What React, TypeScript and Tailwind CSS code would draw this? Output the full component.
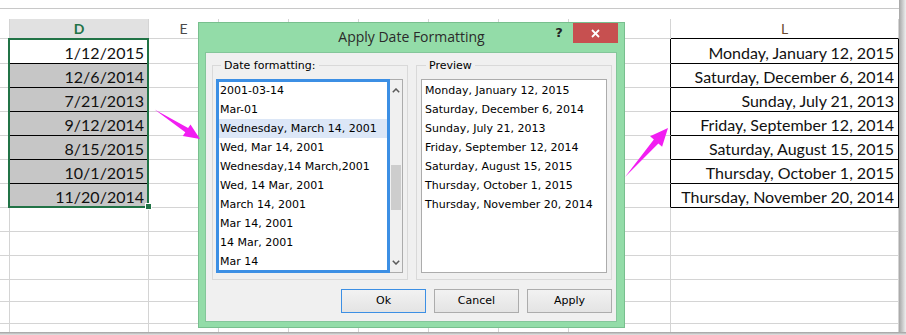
import React from "react";

const dVals = ["1/12/2015", "12/6/2014", "7/21/2013", "9/12/2014", "8/15/2015", "10/1/2015", "11/20/2014"];
const lVals = [
  "Monday, January 12, 2015",
  "Saturday, December 6, 2014",
  "Sunday, July 21, 2013",
  "Friday, September 12, 2014",
  "Saturday, August 15, 2015",
  "Thursday, October 1, 2015",
  "Thursday, November 20, 2014",
];
const formats = [
  "2001-03-14",
  "Mar-01",
  "Wednesday, March 14, 2001",
  "Wed, Mar 14, 2001",
  "Wednesday,14 March,2001",
  "Wed, 14 Mar, 2001",
  "March 14, 2001",
  "Mar 14, 2001",
  "14 Mar, 2001",
  "Mar 14",
];

const G = "border-[#d4d4d4]";

function EmptyCells({ last }: { last?: boolean }) {
  const b = last ? "border-r" : "border-r border-b";
  return (
    <>
      <div className={`w-[10px] shrink-0 ${b} ${G}`} />
      <div className={`w-[139px] shrink-0 ${b} ${G}`} />
      <div className={`w-[70px] shrink-0 ${b} ${G}`} />
      <div className={`w-[70px] shrink-0 ${b} ${G}`} />
      <div className={`w-[70px] shrink-0 ${b} ${G}`} />
      <div className={`w-[70px] shrink-0 ${b} ${G}`} />
      <div className={`w-[70px] shrink-0 ${b} ${G}`} />
      <div className={`w-[70px] shrink-0 ${b} ${G}`} />
      <div className={`w-[102px] shrink-0 ${b} ${G}`} />
      <div className={`w-[228px] shrink-0 ${b} ${G}`} />
    </>
  );
}

function DataRow({ i, hClass }: { i: number; hClass: string }) {
  const dBg = i === 0 ? "bg-white" : "bg-[#c6c6c6]";
  return (
    <div className={`flex ${hClass}`}>
      <div className={`w-[10px] shrink-0 border-r border-b ${G}`} />
      <div className={`w-[139px] shrink-0 border-r border-b ${G} flex`}>
        <div className={`flex-1 ${dBg} border-b border-black -mb-px flex items-end justify-end pr-[4px] pb-[1px] leading-[19px]`}>
          {dVals[i]}
        </div>
      </div>
      <div className={`w-[70px] shrink-0 border-r border-b ${G}`} />
      <div className={`w-[70px] shrink-0 border-r border-b ${G}`} />
      <div className={`w-[70px] shrink-0 border-r border-b ${G}`} />
      <div className={`w-[70px] shrink-0 border-r border-b ${G}`} />
      <div className={`w-[70px] shrink-0 border-r border-b ${G}`} />
      <div className={`w-[70px] shrink-0 border-r border-b ${G}`} />
      <div className={`w-[102px] shrink-0 border-r border-b border-b-[#d4d4d4] border-r-black`} />
      <div className="w-[228px] shrink-0 border-r border-b border-black flex items-end justify-end pr-[4px] pb-[1px] leading-[19px] whitespace-nowrap">
        {lVals[i]}
      </div>
    </div>
  );
}

function Sheet() {
  return (
    <div className="w-[899px] shrink-0 flex flex-col font-['Lato',sans-serif] text-[16px] text-[#111]">
      <div className="h-[8px] shrink-0" />
      <div className="h-[11px] shrink-0 border-t border-[#c8c8c8]" />
      {/* header row */}
      <div className="flex h-[20px] shrink-0 text-[14px]">
        <div className={`w-[10px] shrink-0 border-r border-b ${G}`} />
        <div className={`w-[139px] shrink-0 border-r border-b ${G} bg-[#e1e1e1] flex items-center justify-center font-bold text-[#217346]`}>
          D
        </div>
        <div className={`w-[70px] shrink-0 border-r border-b ${G} flex items-center justify-center text-[#4a4a4a]`}>E</div>
        <div className={`w-[70px] shrink-0 border-r border-b ${G}`} />
        <div className={`w-[70px] shrink-0 border-r border-b ${G}`} />
        <div className={`w-[70px] shrink-0 border-r border-b ${G}`} />
        <div className={`w-[70px] shrink-0 border-r border-b ${G}`} />
        <div className={`w-[70px] shrink-0 border-r border-b ${G}`} />
        <div className={`w-[102px] shrink-0 border-r border-b ${G}`} />
        <div className={`w-[228px] shrink-0 border-r ${G} border-b border-b-black flex items-center justify-center text-[#6a4a30]`}>
          L
        </div>
      </div>
      <DataRow i={0} hClass="h-[25px] shrink-0" />
      <DataRow i={1} hClass="h-[24px] shrink-0" />
      <DataRow i={2} hClass="h-[24px] shrink-0" />
      <DataRow i={3} hClass="h-[24px] shrink-0" />
      <DataRow i={4} hClass="h-[24px] shrink-0" />
      <DataRow i={5} hClass="h-[24px] shrink-0" />
      <DataRow i={6} hClass="h-[24px] shrink-0" />
      <div className="flex h-[24px] shrink-0"><EmptyCells /></div>
      <div className="flex h-[24px] shrink-0"><EmptyCells /></div>
      <div className="flex h-[24px] shrink-0"><EmptyCells /></div>
      <div className="flex h-[22px] shrink-0"><EmptyCells /></div>
      <div className="flex h-[22px] shrink-0"><EmptyCells /></div>
      <div className="flex flex-1"><EmptyCells last /></div>
    </div>
  );
}

function Chevron({ up }: { up?: boolean }) {
  return (
    <svg width="8" height="5" viewBox="0 0 8 5">
      <polyline
        points={up ? "0.8,4.3 4,1 7.2,4.3" : "0.8,0.7 4,4 7.2,0.7"}
        fill="none"
        stroke="#5a5a5a"
        strokeWidth="1.5"
      />
    </svg>
  );
}

function Dialog() {
  return (
    <div className="absolute left-[198px] top-[22px] w-[427px] h-[306px] bg-[#93dca8] border border-[#78bf8e] flex flex-col font-['DejaVu_Sans',sans-serif] text-[11px] text-black">
      <div className="h-[29px] shrink-0 grid grid-cols-[1fr_auto_1fr] items-start">
        <div />
        <div className="pt-[4px] font-['Open_Sans',sans-serif] text-[14px] leading-[20px] text-[#2b2b2b] whitespace-nowrap">
          Apply Date Formatting
        </div>
        <div className="flex justify-end items-start pr-[6px]">
          <div className="w-[16px] h-[20px] mr-[6px] flex items-center justify-center font-bold text-[13px] text-[#222]">?</div>
          <div className="w-[45px] h-[20px] bg-[#c75050] flex items-center justify-center">
            <svg width="9" height="9" viewBox="0 0 9 9">
              <line x1="1" y1="1" x2="8" y2="8" stroke="white" strokeWidth="1.8" />
              <line x1="8" y1="1" x2="1" y2="8" stroke="white" strokeWidth="1.8" />
            </svg>
          </div>
        </div>
      </div>
      <div className="ml-[6px] w-[412px] h-[270px] shrink-0 bg-[#f0f0f0] border border-[#84c69a] flex flex-col pl-[6px] pr-[4px] pt-[6px] pb-[8px]">
        <div className="flex gap-[8px]">
          <fieldset className="w-[196px] border border-[#d9d9d9] pl-[3px] pr-[4px] pt-[7px] pb-[6px]">
            <legend className="ml-[5px] px-[3px] leading-[13px]">Date formatting:</legend>
            <div className="flex h-[194px] w-[187px]">
              <div className="w-[174px] border-[3px] border-[#3c8fe4] bg-white overflow-hidden">
                <div className="-mt-[1px]">
                  {formats.map((f, i) => (
                    <div
                      key={f}
                      className={`h-[19px] leading-[19px] pl-[1px] whitespace-nowrap ${i === 2 ? "bg-[#dce7f7]" : ""}`}
                    >
                      {f}
                    </div>
                  ))}
                </div>
              </div>
              <div className="w-[13px] border-y border-r border-[#acacac] bg-[#f0f0f0] flex flex-col">
                <div className="h-[20px] flex items-center justify-center">
                  <Chevron up />
                </div>
                <div className="flex-1">
                  <div className="mt-[65px] h-[45px] mx-[1px] bg-[#cdcdcd]" />
                </div>
                <div className="h-[20px] flex items-center justify-center">
                  <Chevron />
                </div>
              </div>
            </div>
          </fieldset>
          <fieldset className="w-[196px] border border-[#d9d9d9] pl-[4px] pr-[4px] pt-[7px] pb-[6px]">
            <legend className="ml-[5px] px-[3px] leading-[13px]">Preview</legend>
            <div className="w-[186px] h-[194px] border border-[#acacac] bg-white pl-[3px] pt-[1px] overflow-hidden">
              {lVals.map((v) => (
                <div key={v} className="h-[19px] leading-[19px] whitespace-nowrap">
                  {v}
                </div>
              ))}
            </div>
          </fieldset>
        </div>
        <div className="mt-[9px] flex justify-end gap-[8px]">
          <div className="w-[85px] h-[24px] border border-[#3c8fe4] bg-linear-to-b from-[#f2f2f2] to-[#e4e4e4] flex items-center justify-center">
            Ok
          </div>
          <div className="w-[85px] h-[24px] border border-[#acacac] bg-linear-to-b from-[#f2f2f2] to-[#e4e4e4] flex items-center justify-center">
            Cancel
          </div>
          <div className="w-[85px] h-[24px] border border-[#acacac] bg-linear-to-b from-[#f2f2f2] to-[#e4e4e4] flex items-center justify-center">
            Apply
          </div>
        </div>
      </div>
    </div>
  );
}

export default function App() {
  return (
    <div className="relative w-[906px] h-[335px] overflow-hidden bg-white flex flex-col">
      <div className="flex h-[332px] shrink-0">
        <Sheet />
        <div className="flex-1 bg-linear-to-r from-[#a6a6a6] to-[#efefef]" />
      </div>
      <div className="flex-1 bg-linear-to-b from-[#a0a0a0] to-[#e6e6e6]" />

      {/* selection overlay */}
      <div className="absolute left-[8px] top-[38px] w-[141px] h-[170px] border-2 border-[#217346]" />
      <div className="absolute left-[145px] top-[203px] w-[7px] h-[7px] bg-[#217346] border border-white" />

      <Dialog />

      <svg className="absolute left-0 top-0 pointer-events-none" width="906" height="335" viewBox="0 0 906 335">
        <polygon
          points="154.6,109.5 188.1,128.1 190.5,124.4 200,139 182.8,136 185.3,132.3"
          fill="#f21ef2"
        />
        <polygon
          points="625,177 653.85,139.5 650.1,136.2 668,128 662.1,146.8 658.35,143.5"
          fill="#f21ef2"
        />
      </svg>
    </div>
  );
}
